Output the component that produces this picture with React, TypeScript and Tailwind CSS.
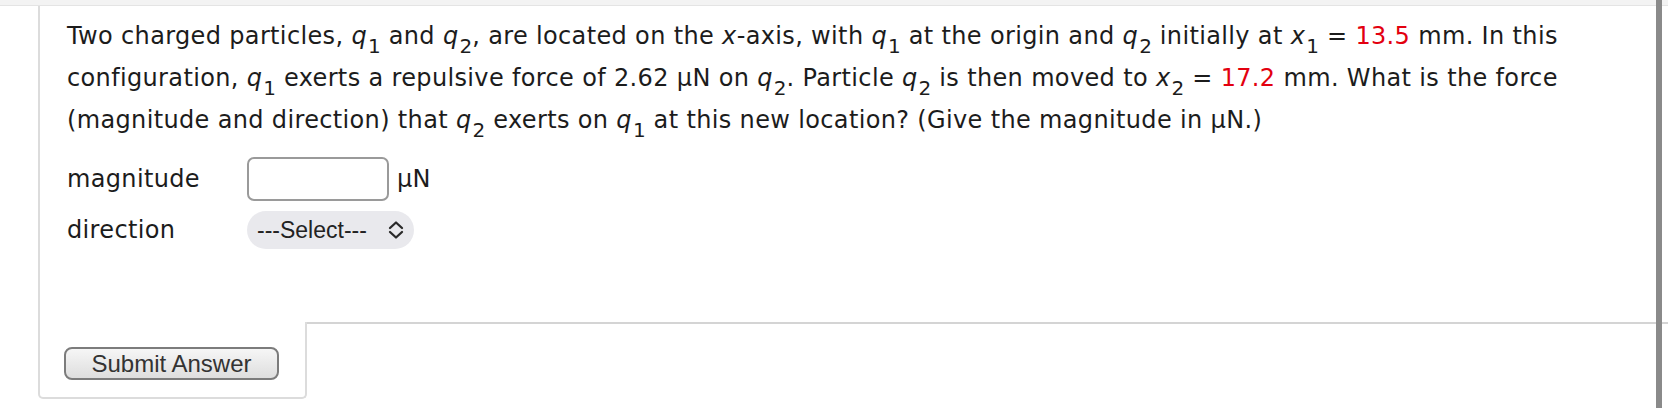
import React from "react";

function Q({ n, v = "q" }: { n: string; v?: string }) {
  return (
    <>
      <i>{v}</i>
      <span className="align-[-0.45em] text-[20px] leading-none ml-[1px] tracking-normal">{n}</span>
    </>
  );
}

function Red({ children }: { children: React.ReactNode }) {
  return <span className="text-[#e3000f]">{children}</span>;
}

export default function App() {
  return (
    <div className="relative w-[1668px] h-[408px] bg-white overflow-hidden font-['DejaVu_Sans',sans-serif] text-[#1c1c1c]">
      <div className="h-[6px] bg-[#f3f3f3] border-b border-[#e4e4e4]" />

      <div className="ml-[38px] h-[316px] border-l-2 border-[#dcdcdc] pl-[27px] pt-[9px]">
        <p className="text-[24px] leading-[42px] tracking-[0.35px] whitespace-nowrap">
          Two charged particles, <Q n="1" /> and <Q n="2" />, are located on the <i>x</i>-axis, with <Q n="1" /> at the origin and <Q n="2" /> initially at <Q v="x" n="1" /> = <Red>13.5</Red> mm. In this
          <br />
          configuration, <Q n="1" /> exerts a repulsive force of 2.62 μN on <Q n="2" />. Particle <Q n="2" /> is then moved to <Q v="x" n="2" /> = <Red>17.2</Red> mm. What is the force
          <br />
          (magnitude and direction) that <Q n="2" /> exerts on <Q n="1" /> at this new location? (Give the magnitude in μN.)
        </p>

        <div className="mt-[16px] flex items-center text-[24px] tracking-[0.35px]">
          <span className="w-[180px]">magnitude</span>
          <div className="w-[142px] h-[44px] rounded-[7px] border-2 border-[#9a9a9a] bg-white" />
          <span className="ml-[8px]">μN</span>
        </div>

        <div className="mt-[10px] flex items-center text-[24px] tracking-[0.35px]">
          <span className="w-[180px]">direction</span>
          <div className="w-[167px] h-[38px] rounded-full bg-[#e9e9ed] flex items-center pl-[10px] pr-[9px] justify-between font-['Liberation_Sans',Arial,sans-serif] text-[23px] tracking-normal text-[#222]">
            <span>---Select---</span>
            <svg width="18" height="20" viewBox="0 0 18 20" fill="none" stroke="#2a2a2a" strokeWidth="2.3" strokeLinecap="round" strokeLinejoin="round">
              <path d="M3 8 L9 2.5 L15 8" />
              <path d="M3 12 L9 17.5 L15 12" />
            </svg>
          </div>
        </div>
      </div>

      <div className="flex">
        <div className="ml-[38px] w-[269px] h-[77px] border-l-2 border-r-2 border-b-2 border-[#dcdcdc] rounded-b-[5px] pl-[24px] pt-[25px]">
          <button className="w-[215px] h-[33px] rounded-[8px] border-2 border-[#7c7c7c] bg-gradient-to-b from-[#f6f6f6] to-[#dedede] font-['Liberation_Sans',Arial,sans-serif] text-[24px] leading-none text-[#333]">
            Submit Answer
          </button>
        </div>
        <div className="flex-1 border-t-2 border-[#d4d4d4]" />
      </div>

      <div className="absolute top-0 left-[1656px] w-[6px] h-full bg-[#8a8a8a]" />
    </div>
  );
}
